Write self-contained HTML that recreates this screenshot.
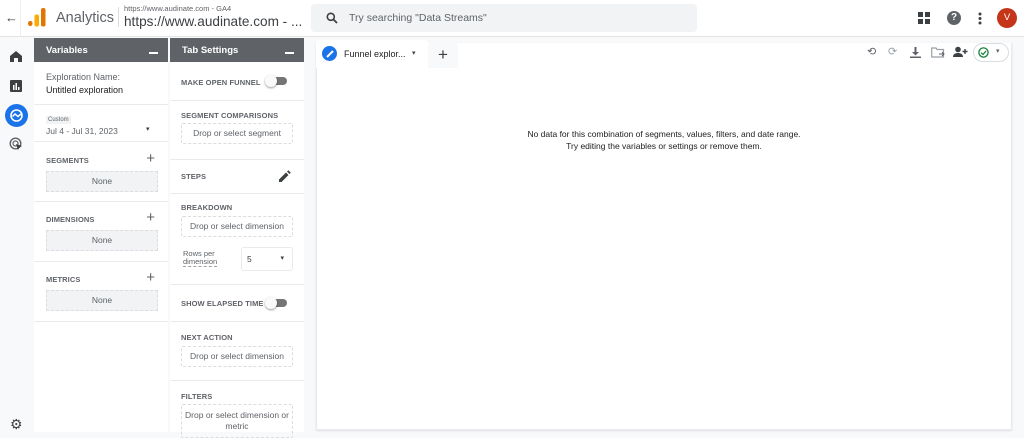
<!DOCTYPE html>
<html><head><meta charset="utf-8"><style>
*{box-sizing:border-box;margin:0;padding:0}
body{width:1024px;height:432px;overflow:hidden;background:#f8f9fa;font-family:"Liberation Sans",Arial,sans-serif;color:#3c4043;position:relative}
.abs{position:absolute}
.top{left:0;top:0;width:1024px;height:37px;background:#fff;border-bottom:1px solid #e3e3e3}
.panel{background:#fff}
.hdr{height:24px;background:#5f6368;color:#fff;font-size:9.5px;font-weight:bold;padding:7px 12px;position:relative}
.hdr .mn{position:absolute;right:10px;top:14px;width:9px;height:2px;background:#fff}
.lbl{font-size:7.5px;font-weight:bold;color:#5f6368;letter-spacing:.1px}
.none{position:absolute;left:12px;width:112px;height:21px;background:#f1f3f4;border:1px dashed #dadce0;font-size:8.5px;color:#5f6368;text-align:center;line-height:19px}
.drop{position:absolute;left:11px;width:112px;height:21px;border:1px dashed #dadce0;font-size:8.5px;color:#5f6368;text-align:center;line-height:19px;border-radius:2px}
.sep{position:absolute;left:0;width:100%;height:1px;background:#e8eaed}
.plus{position:absolute;right:13px;font-size:15px;color:#5f6368;line-height:12px}
.tog{position:absolute;width:20px;height:8px;border-radius:4px;background:#757575}
.tog:before{content:"";position:absolute;left:-2px;top:-2px;width:12px;height:12px;border-radius:50%;background:#fafafa;box-shadow:0 1px 2px rgba(0,0,0,.4)}
</style></head><body>
<div class="abs top">
  <div class="abs" style="left:5px;top:10px;font-size:13px;color:#3c4043">←</div>
  <div class="abs" style="left:20px;top:0;width:1px;height:37px;background:#eee"></div>
  <svg class="abs" style="left:28px;top:8px" width="18" height="20"><rect x="0" y="13" width="4.5" height="5" rx="2.2" fill="#e37400"/><rect x="6.5" y="6.5" width="4.5" height="12" rx="2" fill="#f9ab00"/><rect x="13" y="0" width="4.5" height="18.5" rx="2" fill="#e37400"/></svg>
  <div class="abs" style="left:56px;top:10px;font-size:14.5px;color:#5f6368">Analytics</div>
  <div class="abs" style="left:118px;top:7px;width:1px;height:20px;background:#dadce0"></div>
  <div class="abs" style="left:124px;top:4px;font-size:7.5px;color:#5f6368">https://www.audinate.com - GA4</div>
  <div class="abs" style="left:124px;top:14px;font-size:13.6px;color:#3c4043;white-space:nowrap">https://www.audinate.com - ...</div>
  <div class="abs" style="left:311px;top:4px;width:386px;height:28px;background:#f1f3f4;border-radius:4px">
    <svg class="abs" style="left:15px;top:8px" width="12" height="12"><circle cx="4.8" cy="4.8" r="3.5" stroke="#3c4043" stroke-width="1.6" fill="none"/><path d="M7.5 7.5L11 11" stroke="#3c4043" stroke-width="1.8"/></svg>
    <div class="abs" style="left:38px;top:8px;font-size:10.5px;color:#5f6368">Try searching "Data Streams"</div>
  </div>
  <svg class="abs" style="left:918px;top:12px" width="12" height="12" fill="#3c4043"><rect x="0" y="0" width="5" height="5"/><rect x="7" y="0" width="5" height="5"/><rect x="0" y="7" width="5" height="5"/><rect x="7" y="7" width="5" height="5"/></svg>
  <div class="abs" style="left:947px;top:11px;width:14px;height:14px;border-radius:50%;background:#5f6368;color:#fff;font-size:10px;font-weight:bold;text-align:center;line-height:14px">?</div>
  <svg class="abs" style="left:978px;top:12px" width="4" height="13" fill="#3c4043"><circle cx="2" cy="2" r="1.5"/><circle cx="2" cy="6.5" r="1.5"/><circle cx="2" cy="11" r="1.5"/></svg>
  <div class="abs" style="left:997px;top:8px;width:20px;height:20px;border-radius:50%;background:#c5351a;color:#fff;font-size:9.5px;text-align:center;line-height:20px">V</div>
</div>
<svg class="abs" style="left:10px;top:51px" width="12" height="11" fill="#3c4043"><path d="M6 0L0 5V11H4V7H8V11H12V5Z"/></svg>
<svg class="abs" style="left:10px;top:80px" width="12" height="12"><rect width="12" height="12" rx="1" fill="#3c4043"/><rect x="3" y="5" width="1.5" height="5" fill="#fff"/><rect x="5.5" y="3" width="1.5" height="7" fill="#fff"/><rect x="8" y="7" width="1.5" height="3" fill="#fff"/></svg>
<div class="abs" style="left:5px;top:104px;width:23px;height:23px;border-radius:50%;background:#1a73e8"></div>
<svg class="abs" style="left:9px;top:108px" width="15" height="15"><circle cx="7.5" cy="7.5" r="5.5" stroke="#fff" stroke-width="1.6" fill="none"/><path d="M3.5 8.5L6 6L9 8.5L12 6" stroke="#fff" stroke-width="1.5" fill="none"/></svg>
<svg class="abs" style="left:9px;top:137px" width="14" height="14"><circle cx="6.5" cy="6.5" r="5.3" stroke="#5f6368" stroke-width="1.4" fill="none"/><circle cx="6.5" cy="6.5" r="2.5" stroke="#5f6368" stroke-width="1.2" fill="none"/><path d="M7 7L13 9L10.5 10.5L9 13Z" fill="#3c4043"/></svg>
<div class="abs" style="left:10px;top:418px;font-size:14px;color:#3c4043;line-height:12px">⚙</div>
<div class="abs panel" style="left:34px;top:38px;width:134px;height:394px">
  <div class="hdr">Variables<span class="mn"></span></div>
  <div class="abs" style="left:12px;top:34px;font-size:9px;color:#5f6368">Exploration Name:</div>
  <div class="abs" style="left:12px;top:47px;font-size:9px;color:#202124">Untitled exploration</div>
  <div class="sep" style="top:66px"></div>
  <div class="abs" style="left:12px;top:78px;font-size:6px;background:#f1f3f4;padding:1px 2px;color:#5f6368">Custom</div>
  <div class="abs" style="left:12px;top:88px;font-size:8.5px;color:#5f6368">Jul 4 - Jul 31, 2023</div>
  <div class="abs" style="left:112px;top:87px;font-size:7px;color:#3c4043">▾</div>
  <div class="sep" style="top:103px"></div>
  <div class="abs lbl" style="left:12px;top:118px">SEGMENTS</div><div class="plus" style="top:115px">+</div>
  <div class="none" style="top:133px">None</div>
  <div class="sep" style="top:163px"></div>
  <div class="abs lbl" style="left:12px;top:177px">DIMENSIONS</div><div class="plus" style="top:174px">+</div>
  <div class="none" style="top:192px">None</div>
  <div class="sep" style="top:223px"></div>
  <div class="abs lbl" style="left:12px;top:237px">METRICS</div><div class="plus" style="top:234px">+</div>
  <div class="none" style="top:252px">None</div>
  <div class="sep" style="top:283px"></div>
</div>
<div class="abs panel" style="left:170px;top:38px;width:134px;height:394px">
  <div class="hdr">Tab Settings<span class="mn"></span></div>
  <div class="abs lbl" style="left:11px;top:40px">MAKE OPEN FUNNEL</div>
  <div class="tog" style="left:97px;top:39px"></div>
  <div class="sep" style="top:62px"></div>
  <div class="abs lbl" style="left:11px;top:73px">SEGMENT COMPARISONS</div>
  <div class="drop" style="top:85px">Drop or select segment</div>
  <div class="sep" style="top:121px"></div>
  <div class="abs lbl" style="left:11px;top:134px">STEPS</div>
  <svg class="abs" style="left:109px;top:132px" width="12" height="12" fill="#3c4043"><path d="M0 9.5V12H2.5L9.5 5L7 2.5ZM11.8 2.7L9.3 0.2L8 1.5L10.5 4Z"/></svg>
  <div class="sep" style="top:155px"></div>
  <div class="abs lbl" style="left:11px;top:165px">BREAKDOWN</div>
  <div class="drop" style="top:178px">Drop or select dimension</div>
  <div class="abs" style="left:13px;top:212px;font-size:7.5px;color:#5f6368;line-height:8px;border-bottom:1px dashed #9aa0a6">Rows per<br>dimension</div>
  <div class="abs" style="left:71px;top:209px;width:52px;height:24px;border:1px solid #e8eaed;border-radius:3px;font-size:8.5px;padding:6px 5px;color:#3c4043">5<span style="position:absolute;right:8px;top:6px;font-size:7px">▾</span></div>
  <div class="sep" style="top:246px"></div>
  <div class="abs lbl" style="left:11px;top:261px">SHOW ELAPSED TIME</div>
  <div class="tog" style="left:97px;top:261px"></div>
  <div class="sep" style="top:283px"></div>
  <div class="abs lbl" style="left:11px;top:295px">NEXT ACTION</div>
  <div class="drop" style="top:308px">Drop or select dimension</div>
  <div class="sep" style="top:342px"></div>
  <div class="abs lbl" style="left:11px;top:354px">FILTERS</div>
  <div class="drop" style="top:366px;height:34px;line-height:11px;padding-top:5px">Drop or select dimension or metric</div>
</div>
<div class="abs" style="left:316px;top:43px;width:696px;height:387px;background:#fff;border:1px solid #e8eaed;border-top:none;box-shadow:0 1px 2px rgba(0,0,0,.1)"></div>
<div class="abs" style="left:316px;top:40px;width:112px;height:28px;background:#fff;border-radius:3px 3px 0 0"></div>
<div class="abs" style="left:428px;top:43px;width:30px;height:25px;background:#f8f9fa;border-radius:3px 3px 0 0;font-size:17px;color:#3c4043;text-align:center;line-height:24px">+</div>
<div class="abs" style="left:322px;top:46px;width:15px;height:15px;border-radius:50%;background:#1a73e8"></div>
<svg class="abs" style="left:326px;top:50px" width="8" height="8"><path d="M1 7L7 1" stroke="#fff" stroke-width="2"/></svg>
<div class="abs" style="left:344px;top:49px;font-size:9px;color:#202124">Funnel explor...</div>
<div class="abs" style="left:412px;top:49px;font-size:7px;color:#3c4043">▾</div>
<div class="abs" style="left:867px;top:45px;font-size:11px;color:#5f6368">⟲</div>
<div class="abs" style="left:888px;top:45px;font-size:11px;color:#9aa0a6">⟳</div>
<svg class="abs" style="left:910px;top:47px" width="11" height="11" fill="#5f6368"><path d="M4.5 0H6.5V5H9L5.5 8.5L2 5H4.5Z"/><rect x="0" y="9.5" width="11" height="1.5"/></svg>
<svg class="abs" style="left:931px;top:47px" width="14" height="11"><path d="M0.7 1H5L6 2.5H12.5V10H0.7Z" stroke="#9aa0a6" stroke-width="1.2" fill="none"/><path d="M8 7H13M11 5L13 7L11 9" stroke="#5f6368" fill="none"/></svg>
<svg class="abs" style="left:953px;top:46px" width="16" height="12" fill="#3c4043"><circle cx="5" cy="3.5" r="2.8"/><path d="M0 11C0 8 2.5 7 5 7S10 8 10 11Z"/><path d="M12 3V8M9.5 5.5H14.5" stroke="#3c4043" stroke-width="1.4"/></svg>
<div class="abs" style="left:973px;top:43px;width:36px;height:19px;border:1px solid #dadce0;border-radius:10px"></div>
<svg class="abs" style="left:978px;top:47px" width="11" height="11"><circle cx="5.5" cy="5.5" r="4.6" stroke="#188038" stroke-width="1.3" fill="none"/><path d="M3 5.7L5 7.5L8 4" stroke="#188038" stroke-width="1.3" fill="none"/></svg>
<div class="abs" style="left:996px;top:47px;font-size:7px;color:#5f6368">▾</div>
<div class="abs" style="left:316px;top:128px;width:696px;text-align:center;font-size:8.5px;color:#202124;line-height:12px">No data for this combination of segments, values, filters, and date range.<br>Try editing the variables or settings or remove them.</div>
</body></html>
